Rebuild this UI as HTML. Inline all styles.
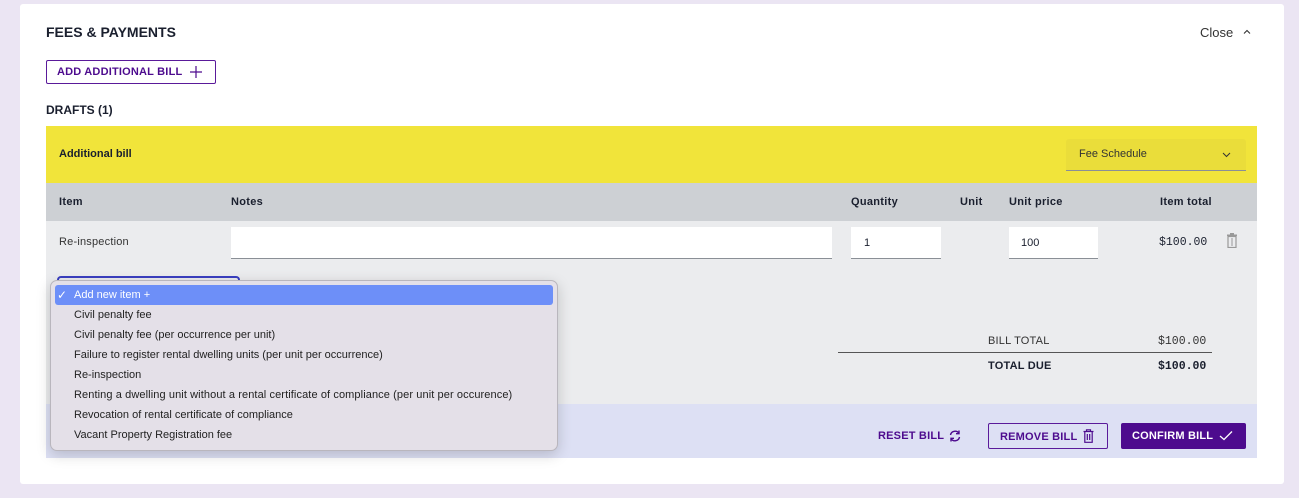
<!DOCTYPE html>
<html><head><style>
*{box-sizing:border-box;margin:0;padding:0}
body{width:1299px;height:498px;background:#ebe5f3;font-family:"Liberation Sans",sans-serif;position:relative;overflow:hidden;color:#1a1f2e}
.abs{position:absolute}
.card{left:20px;top:4px;width:1264px;height:480px;background:#fff;border-radius:3px}
.mono{font-family:"Liberation Mono",monospace}
.inp{background:#fff;border-bottom:1px solid #8a8f96}
.dd div{position:absolute;left:23px;font-size:11px;color:#222}
.h{font-size:11px;font-weight:bold;letter-spacing:0.3px}
</style></head><body>
<div class="abs card"></div>
<div class="abs" style="left:46px;top:24px;font-size:14px;font-weight:bold;color:#1a1f2e">FEES &amp; PAYMENTS</div>
<div class="abs" style="left:1200px;top:25px;font-size:13px;color:#333">Close</div>
<svg class="abs" style="left:1243px;top:29px" width="8" height="6" viewBox="0 0 8 6" fill="none" stroke="#333" stroke-width="1.1"><path d="M1 4.5L4 1.5L7 4.5"/></svg>
<div class="abs" style="left:46px;top:60px;width:170px;height:24px;border:1px solid #5a1a9a;border-radius:2px;color:#4d0b8e;font-size:11px;font-weight:bold;line-height:22px;padding-left:10px;letter-spacing:0.2px">ADD ADDITIONAL BILL</div>
<svg class="abs" style="left:189px;top:65px" width="14" height="14" viewBox="0 0 14 14" stroke="#4d0b8e" stroke-width="1.2"><path d="M7 1V13M1 7H13"/></svg>
<div class="abs" style="left:46px;top:103px;font-size:12px;font-weight:bold">DRAFTS (1)</div>
<div class="abs" style="left:46px;top:126px;width:1211px;height:57px;background:#f1e43a"></div>
<div class="abs" style="left:59px;top:148px;font-size:11px;font-weight:bold">Additional bill</div>
<div class="abs" style="left:1066px;top:139px;width:180px;height:32px;background:#eadd3a;border-bottom:1px solid #8a8f96;border-radius:3px 3px 0 0;font-size:11px;color:#333;padding:9px 0 0 13px">Fee Schedule</div>
<svg class="abs" style="left:1222px;top:152px" width="9" height="6" viewBox="0 0 9 6" fill="none" stroke="#333" stroke-width="1"><path d="M1 1L4.5 4.5L8 1"/></svg>
<div class="abs" style="left:46px;top:183px;width:1211px;height:38px;background:#cdd0d4"></div>
<div class="abs h" style="top:196px;left:59px">Item</div>
<div class="abs h" style="top:196px;left:231px">Notes</div>
<div class="abs h" style="top:196px;left:851px">Quantity</div>
<div class="abs h" style="top:196px;left:960px">Unit</div>
<div class="abs h" style="top:196px;left:1009px">Unit price</div>
<div class="abs h" style="top:196px;left:1160px">Item total</div>
<div class="abs" style="left:46px;top:221px;width:1211px;height:183px;background:#ebecee"></div>
<div class="abs" style="left:59px;top:236px;font-size:11px;color:#333;letter-spacing:0.2px">Re-inspection</div>
<div class="abs inp" style="left:231px;top:227px;width:601px;height:32px"></div>
<div class="abs inp" style="left:851px;top:227px;width:90px;height:32px;font-size:11px;padding:10px 0 0 13px">1</div>
<div class="abs inp" style="left:1009px;top:227px;width:89px;height:32px;font-size:11px;padding:10px 0 0 12px">100</div>
<div class="abs mono" style="left:1159px;top:236px;font-size:11.5px">$100.00</div>
<svg class="abs" style="left:1226px;top:233px" width="12" height="15" viewBox="0 0 12 15"><rect x="1" y="1.5" width="10" height="1.5" fill="#999"/><rect x="4" y="0" width="4" height="2" fill="#999"/><rect x="2" y="3.5" width="8" height="11" fill="none" stroke="#999" stroke-width="1.2"/><line x1="6" y1="5" x2="6" y2="13" stroke="#999"/></svg>
<div class="abs" style="left:57px;top:276px;width:183px;height:10px;border:2px solid #3a3fc0;border-bottom:none;border-radius:4px 4px 0 0"></div>
<div class="abs" style="left:988px;top:335px;font-size:11px;color:#333;letter-spacing:0.2px">BILL TOTAL</div>
<div class="abs mono" style="left:1158px;top:335px;font-size:11.5px;color:#333">$100.00</div>
<div class="abs" style="left:838px;top:352px;width:374px;height:1px;background:#555"></div>
<div class="abs" style="left:988px;top:360px;font-size:11px;font-weight:bold;letter-spacing:0.2px">TOTAL DUE</div>
<div class="abs mono" style="left:1158px;top:360px;font-size:11.5px;font-weight:bold">$100.00</div>
<div class="abs" style="left:46px;top:404px;width:1211px;height:54px;background:#dde0f4"></div>
<div class="abs" style="left:878px;top:430px;font-size:11px;font-weight:bold;color:#4d0b8e;letter-spacing:0.2px">RESET BILL</div>
<svg class="abs" style="left:948px;top:429px" width="14" height="14" viewBox="0 0 14 14" fill="none" stroke="#4d0b8e" stroke-width="1.4"><path d="M2.5 6A4.6 4.6 0 0 1 11 4.5"/><path d="M11.5 8A4.6 4.6 0 0 1 3 9.5"/><path d="M11 1.5V4.7H8"/><path d="M3 12.5V9.3H6"/></svg>
<div class="abs" style="left:988px;top:423px;width:120px;height:26px;border:1px solid #5a1a9a;border-radius:2px;font-size:11px;font-weight:bold;color:#4d0b8e;padding:7px 0 0 11px;letter-spacing:0.2px">REMOVE BILL</div>
<svg class="abs" style="left:1083px;top:429px" width="11" height="14" viewBox="0 0 11 14" fill="none" stroke="#4d0b8e" stroke-width="1.2"><path d="M0.5 2.5H10.5M3.5 2.5V0.8H7.5V2.5M1.8 2.5V13.3H9.2V2.5M4.3 5V11M6.7 5V11"/></svg>
<div class="abs" style="left:1121px;top:423px;width:125px;height:26px;background:#4d0b8e;border-radius:2px;font-size:11px;font-weight:bold;color:#fff;padding:7px 0 0 11px;letter-spacing:0.2px">CONFIRM BILL</div>
<svg class="abs" style="left:1219px;top:430px" width="14" height="11" viewBox="0 0 14 11" fill="none" stroke="#fff" stroke-width="1.3"><path d="M1 6L5 9.5L13 1.5"/></svg>
<div class="abs dd" style="left:50px;top:280px;width:508px;height:171px;background:#e4e0e8;border:1px solid #b9b6bd;border-radius:7px;box-shadow:0 4px 14px rgba(0,0,0,0.18)">
<div style="left:4px;top:4px;width:498px;height:20px;background:#6d8ff8;border-radius:3px"></div>
<div style="left:6px;top:7px;color:#fff;font-size:12px">&#10003;</div>
<div style="top:8px;color:#fff">Add new item +</div>
<div style="top:28px">Civil penalty fee</div>
<div style="top:48px">Civil penalty fee (per occurrence per unit)</div>
<div style="top:68px">Failure to register rental dwelling units (per unit per occurrence)</div>
<div style="top:88px">Re-inspection</div>
<div style="top:108px;letter-spacing:0.1px">Renting a dwelling unit without a rental certificate of compliance (per unit per occurence)</div>
<div style="top:128px">Revocation of rental certificate of compliance</div>
<div style="top:148px">Vacant Property Registration fee</div>
</div>
</body></html>
